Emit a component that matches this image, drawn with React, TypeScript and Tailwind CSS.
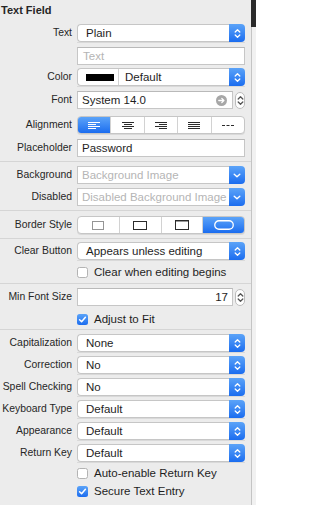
import * as React from 'react';

// Attributes inspector — "Text Field" section

const font = { fontFamily: '"Liberation Sans", Arial, sans-serif' };

function UpDown({ color = 'white' }: { color?: string }) {
  return (
    <svg width="7" height="11" viewBox="0 0 7 11" fill="none" stroke={color} strokeWidth="1.3" strokeLinecap="round" strokeLinejoin="round">
      <path d="M1.2 4 L3.5 1.7 L5.8 4" />
      <path d="M1.2 7 L3.5 9.3 L5.8 7" />
    </svg>
  );
}

function ChevronDown() {
  return (
    <svg width="8" height="5" viewBox="0 0 8 5" fill="none" stroke="white" strokeWidth="1.4" strokeLinecap="round" strokeLinejoin="round">
      <path d="M1.2 1.2 L4 3.8 L6.8 1.2" />
    </svg>
  );
}

function Label({ children }: { children: React.ReactNode }) {
  return (
    <div className="w-[72px] shrink-0 whitespace-nowrap text-right text-[10.4px] leading-[14px] text-[#262626]">
      {children}
    </div>
  );
}

function Popup({ children }: { children: React.ReactNode }) {
  return (
    <div className="ml-[5px] flex h-full w-[168px] shadow-[0_1px_0.5px_rgba(0,0,0,0.08)]">
      <div className="flex flex-1 items-center overflow-hidden rounded-l-[4px] border-y border-l border-[#c6c6c6] bg-white text-[11.5px] leading-[16px] text-[#1e1e1e]">
        {children}
      </div>
      <div className="flex w-[16px] items-center justify-center rounded-r-[4px] bg-linear-to-b from-[#5ba3f8] to-[#1a6cef]">
        <UpDown />
      </div>
    </div>
  );
}

function Combo({ placeholder }: { placeholder: string }) {
  return (
    <div className="ml-[5px] flex h-full w-[168px]">
      <div className="flex flex-1 items-center overflow-hidden whitespace-nowrap border-y border-l border-[#c6c6c6] bg-white pl-[4px] text-[11.5px] leading-[16px] text-[#b5b5b5]">
        {placeholder}
      </div>
      <div className="flex w-[16px] items-center justify-center rounded-r-[4px] bg-linear-to-b from-[#5ba3f8] to-[#1a6cef]">
        <ChevronDown />
      </div>
    </div>
  );
}

function Field({ children, muted, className }: { children: React.ReactNode; muted?: boolean; className?: string }) {
  return (
    <div
      className={`ml-[5px] flex h-full items-center overflow-hidden whitespace-nowrap border border-[#c6c6c6] border-t-[#b9b9b9] bg-white text-[11.5px] leading-[16px] ${
        muted ? 'text-[#b5b5b5]' : 'text-[#1e1e1e]'
      } ${className ?? 'w-[168px] pl-[5px]'}`}
    >
      {children}
    </div>
  );
}

function Stepper() {
  return (
    <div className="ml-[2px] flex h-[17px] w-[10px] items-center justify-center rounded-[5px] border border-[#bcbcbc] bg-white">
      <UpDown color="#555" />
    </div>
  );
}

function Checkbox({ checked }: { checked?: boolean }) {
  if (checked) {
    return (
      <div className="flex h-[11px] w-[11px] items-center justify-center rounded-[2.5px] bg-linear-to-b from-[#5ba3f8] to-[#1a6cef]">
        <svg width="11" height="11" viewBox="0 0 11 11" fill="none" stroke="white" strokeWidth="1.5" strokeLinecap="round" strokeLinejoin="round">
          <path d="M2.6 5.8 L4.6 7.7 L8.4 3.3" />
        </svg>
      </div>
    );
  }
  return <div className="h-[11px] w-[11px] rounded-[2.5px] border border-[#b3b3b3] bg-white" />;
}

function CheckRow({ checked, text, className }: { checked?: boolean; text: string; className: string }) {
  return (
    <div className={`flex h-[14px] items-center pl-[77px] ${className}`}>
      <Checkbox checked={checked} />
      <span className="ml-[6px] whitespace-nowrap text-[11.5px] leading-[14px] text-[#1e1e1e]">{text}</span>
    </div>
  );
}

function Separator({ className }: { className: string }) {
  return <div className={`h-px bg-[#d5d5d5] ${className}`} />;
}

function AlignIcon({ kind, on }: { kind: string; on?: boolean }) {
  const c = on ? 'white' : '#2b2b2b';
  const rows = [0.5, 2.5, 4.5, 6.5];
  const widths = kind === 'justify' ? [12, 12, 12, 12] : [12, 8, 12, 8];
  if (kind === 'natural') {
    return (
      <svg width="12" height="7" viewBox="0 0 12 7" stroke={c} strokeWidth="1">
        <path d="M0 3.5 H3 M4.5 3.5 H7.5 M9 3.5 H12" />
      </svg>
    );
  }
  return (
    <svg width="12" height="7" viewBox="0 0 12 7" stroke={c} strokeWidth="1">
      {rows.map((y, i) => {
        const w = widths[i];
        const x = kind === 'left' ? 0 : kind === 'right' ? 12 - w : (12 - w) / 2;
        return <path key={i} d={`M${x} ${y} H${x + w}`} />;
      })}
    </svg>
  );
}

function BorderIcon({ kind, on }: { kind: string; on?: boolean }) {
  const c = on ? 'white' : '#2b2b2b';
  if (kind === 'none')
    return (
      <svg width="12" height="9" viewBox="0 0 12 9" fill="none">
        <rect x="0.5" y="0.5" width="11" height="8" stroke={c} strokeWidth="1" strokeDasharray="1 1" />
      </svg>
    );
  if (kind === 'line')
    return (
      <svg width="14" height="9" viewBox="0 0 14 9" fill="none">
        <rect x="0.5" y="0.5" width="13" height="8" stroke={c} strokeWidth="1" />
      </svg>
    );
  if (kind === 'bezel')
    return (
      <svg width="14" height="10" viewBox="0 0 14 10" fill="none">
        <rect x="0.5" y="0.5" width="13" height="9" stroke={c} strokeWidth="1" />
        <path d="M1 1.5 H13" stroke={c} strokeWidth="0.8" opacity="0.6" />
      </svg>
    );
  return (
    <svg width="20" height="10" viewBox="0 0 20 10" fill="none">
      <rect x="0.75" y="0.75" width="18.5" height="8.5" rx="4.25" stroke={c} strokeWidth="1.3" />
    </svg>
  );
}

function Segmented({ items, selected }: { items: React.ReactNode[]; selected: number }) {
  return (
    <div className="ml-[5px] flex h-full w-[168px] overflow-hidden rounded-[4px] border border-[#c6c6c6] bg-white shadow-[0_1px_0.5px_rgba(0,0,0,0.08)]">
      {items.map((it, i) => (
        <div
          key={i}
          className={`flex flex-1 items-center justify-center ${i > 0 ? 'border-l border-[#d2d2d2]' : ''} ${
            i === selected ? 'bg-linear-to-b from-[#5ba3f8] to-[#1a6cef]' : ''
          }`}
        >
          {it}
        </div>
      ))}
    </div>
  );
}

function Row({ label, children, className }: { label: string; children: React.ReactNode; className: string }) {
  return (
    <div className={`flex h-[18px] items-center ${className}`}>
      <Label>{label}</Label>
      {children}
    </div>
  );
}

export default function App() {
  return (
    <div className="flex h-[505px] w-[256px] overflow-hidden bg-[#ececec]" style={font}>
      <div className="w-[251px] shrink-0">
        <div className="h-[20px] whitespace-nowrap pl-px text-[11px] font-bold leading-[20px] text-[#262626]">Text Field</div>

        <Row label="Text" className="mt-[4px]">
          <Popup>
            <span className="pl-[8px]">Plain</span>
          </Popup>
        </Row>
        <div className="mt-[5px] flex h-[18px] items-center">
          <div className="w-[72px] shrink-0" />
          <Field muted>Text</Field>
        </div>
        <Row label="Color" className="mt-[3px]">
          <Popup>
            <div className="ml-[8px] h-[7px] w-[28px] shrink-0 bg-black" />
            <div className="ml-[4px] h-full w-px shrink-0 bg-[#d2d2d2]" />
            <span className="pl-[6px]">Default</span>
          </Popup>
        </Row>
        <Row label="Font" className="mt-[5px]">
          <Field className="w-[156px] justify-between pl-[4px] pr-[5px]">
            <span>System 14.0</span>
            <svg width="11" height="11" viewBox="0 0 11 11">
              <circle cx="5.5" cy="5.5" r="5.5" fill="#a7a7a7" />
              <path d="M2.8 5.5 H7.8 M5.8 3.4 L7.9 5.5 L5.8 7.6" stroke="white" strokeWidth="1.3" fill="none" strokeLinecap="round" strokeLinejoin="round" />
            </svg>
          </Field>
          <Stepper />
        </Row>
        <Row label="Alignment" className="mt-[7px]">
          <Segmented
            selected={0}
            items={[
              <AlignIcon key="l" kind="left" on />,
              <AlignIcon key="c" kind="center" />,
              <AlignIcon key="r" kind="right" />,
              <AlignIcon key="j" kind="justify" />,
              <AlignIcon key="n" kind="natural" />,
            ]}
          />
        </Row>
        <Row label="Placeholder" className="mt-[5px]">
          <Field className="w-[168px] pl-[4px]">Password</Field>
        </Row>

        <Separator className="mt-[4px]" />

        <Row label="Background" className="mt-[4px]">
          <Combo placeholder="Background Image" />
        </Row>
        <Row label="Disabled" className="mt-[4px]">
          <Combo placeholder="Disabled Background Image" />
        </Row>

        <Separator className="mt-[4px]" />

        <Row label="Border Style" className="mt-[5px]">
          <Segmented
            selected={3}
            items={[
              <BorderIcon key="n" kind="none" />,
              <BorderIcon key="l" kind="line" />,
              <BorderIcon key="b" kind="bezel" />,
              <BorderIcon key="r" kind="rounded" on />,
            ]}
          />
        </Row>

        <Separator className="mt-[4px]" />

        <Row label="Clear Button" className="mt-[3px]">
          <Popup>
            <span className="whitespace-nowrap pl-[8px]">Appears unless editing</span>
          </Popup>
        </Row>
        <CheckRow text="Clear when editing begins" className="mt-[5px]" />

        <Separator className="mt-[4px]" />

        <Row label="Min Font Size" className="mt-[4px]">
          <Field className="w-[156px] justify-end pr-[4px]">17</Field>
          <Stepper />
        </Row>
        <CheckRow checked text="Adjust to Fit" className="mt-[6px]" />

        <Separator className="mt-[3px]" />

        <Row label="Capitalization" className="mt-[4px]">
          <Popup>
            <span className="pl-[8px]">None</span>
          </Popup>
        </Row>
        <Row label="Correction" className="mt-[4px]">
          <Popup>
            <span className="pl-[8px]">No</span>
          </Popup>
        </Row>
        <Row label="Spell Checking" className="mt-[4px]">
          <Popup>
            <span className="pl-[8px]">No</span>
          </Popup>
        </Row>
        <Row label="Keyboard Type" className="mt-[4px]">
          <Popup>
            <span className="pl-[8px]">Default</span>
          </Popup>
        </Row>
        <Row label="Appearance" className="mt-[4px]">
          <Popup>
            <span className="pl-[8px]">Default</span>
          </Popup>
        </Row>
        <Row label="Return Key" className="mt-[4px]">
          <Popup>
            <span className="pl-[8px]">Default</span>
          </Popup>
        </Row>
        <CheckRow text="Auto-enable Return Key" className="mt-[4px]" />
        <CheckRow checked text="Secure Text Entry" className="mt-[4px]" />
      </div>

      <div className="flex w-[5px] flex-col">
        <div className="h-[27px] bg-[#2b2b2b]" />
        <div className="flex-1 border-l border-[#c4c4c4] bg-[#f1f1f1]" />
      </div>
    </div>
  );
}
